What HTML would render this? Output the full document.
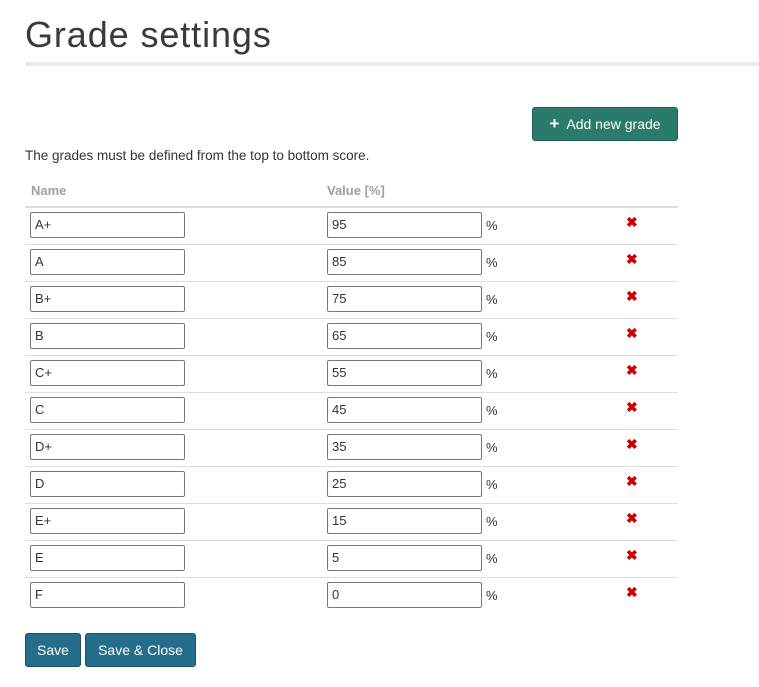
<!DOCTYPE html>
<html><head><style>
body{margin:0;background:#fff;font-family:"Liberation Sans",sans-serif;color:#333;width:759px;height:687px;position:relative;overflow:hidden}
h1{position:absolute;left:25px;top:14px;margin:0;font-weight:400;font-size:36px;color:#3a3a3a;letter-spacing:0.9px}
.hr{position:absolute;left:25px;right:0;top:62px;height:4px;background:#ebebeb}
.add{position:absolute;left:532px;top:107px;width:146px;height:34px;background:#2b7b6c;border:1px solid #1f6155;box-sizing:border-box;border-radius:3px;color:#fff;font-size:14px;line-height:32px;text-align:center}
.note{position:absolute;left:25px;top:148px;font-size:13.5px;color:#333}
.th{position:absolute;top:183px;font-size:13px;font-weight:bold;color:#a0a0a0}
.line{position:absolute;left:25px;width:653px;height:1px;background:#ddd}
.in{position:absolute;width:155px;height:26px;border:1px solid #777;box-sizing:border-box;border-radius:2px;font-size:13px;line-height:24px;padding-left:4px;color:#333}
.pct{position:absolute;left:486px;font-size:13px}
.x{position:absolute;left:626px;color:#c00;font-size:14px;font-weight:bold}
.btn{position:absolute;top:633px;height:34px;background:#246e8b;border:1px solid #1a5166;box-sizing:border-box;border-radius:3px;color:#fff;font-size:14px;line-height:32px;text-align:center}
</style></head><body>
<h1>Grade settings</h1>
<div class="hr"></div>
<div class="add"><b style="font-size:17px">+</b>&nbsp; Add new grade</div>
<div class="note">The grades must be defined from the top to bottom score.</div>
<div class="th" style="left:31px">Name</div>
<div class="th" style="left:327px">Value [%]</div>
<div class="line" style="top:206px;height:2px;background:#dcdcdc"></div>
<div id="rows"></div>
<script>
var d=[["A+",95],["A",85],["B+",75],["B",65],["C+",55],["C",45],["D+",35],["D",25],["E+",15],["E",5],["F",0]];
var h="";
d.forEach(function(r,i){var t=208+37*i;
h+='<div class="in" style="left:30px;top:'+(t+4)+'px">'+r[0]+'</div>';
h+='<div class="in" style="left:327px;top:'+(t+4)+'px">'+r[1]+'</div>';
h+='<div class="pct" style="top:'+(t+10)+'px">%</div>';
h+='<div class="x" style="top:'+(t+6)+'px">✖</div>';
if(i<10)h+='<div class="line" style="top:'+(t+36)+'px"></div>';});
document.getElementById("rows").innerHTML=h;
</script>
<div class="btn" style="left:25px;width:56px">Save</div>
<div class="btn" style="left:85px;width:111px">Save &amp; Close</div>
</body></html>
